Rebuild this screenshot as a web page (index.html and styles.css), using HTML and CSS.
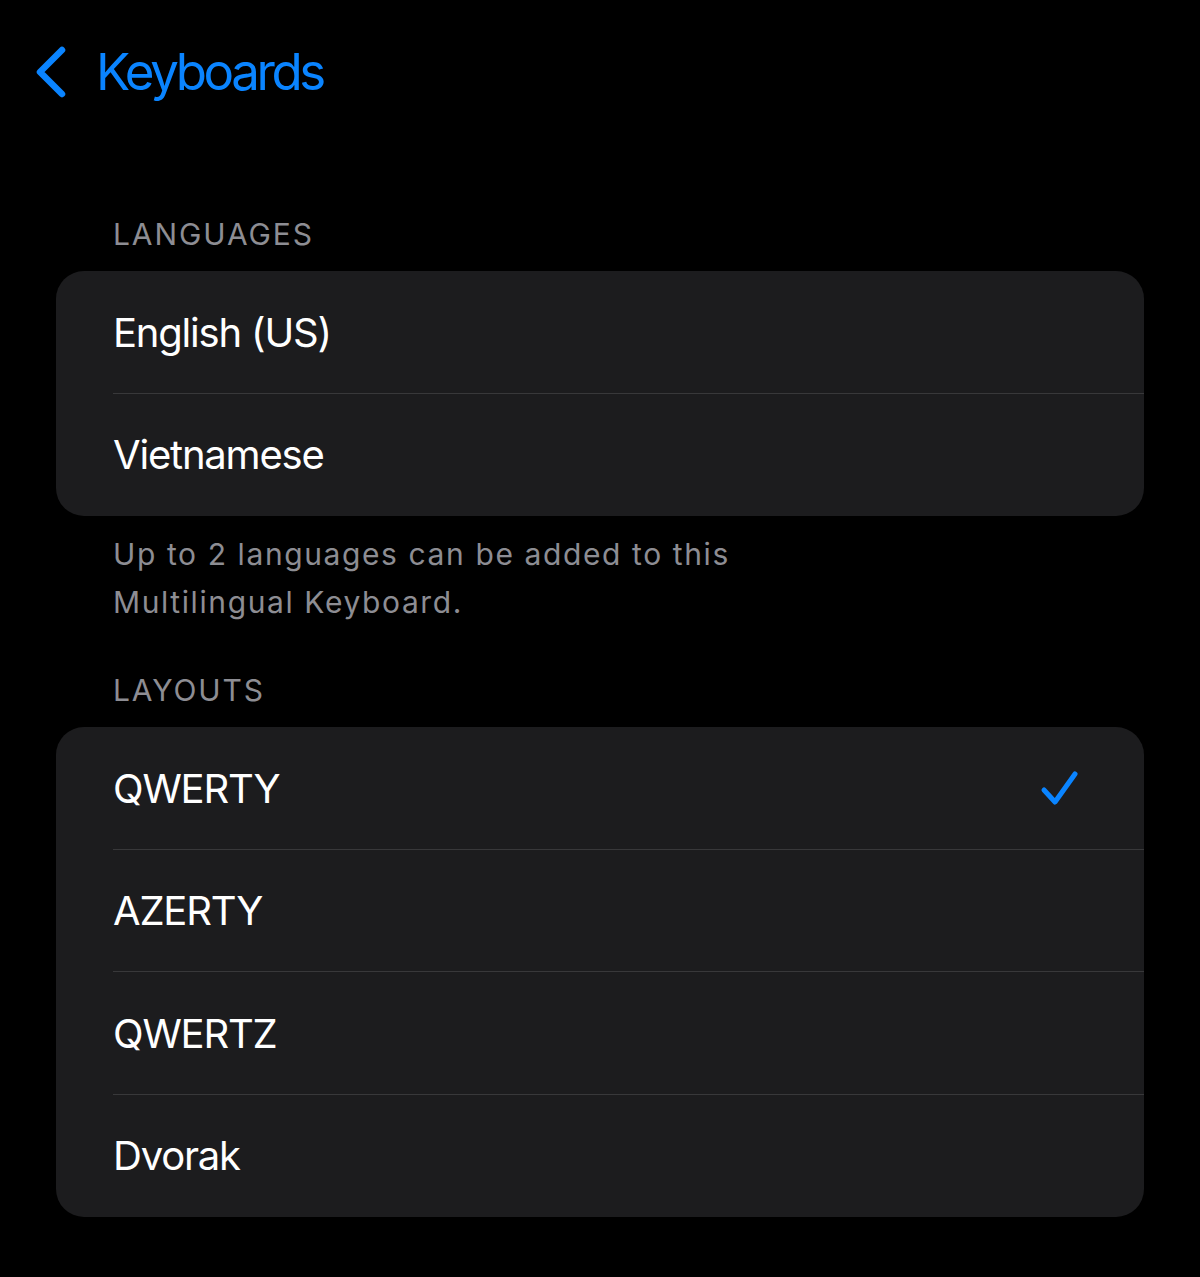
FILE: index.html
```html
<!DOCTYPE html>
<html lang="en">
<head>
    <meta charset="UTF-8">
    <meta name="viewport" content="width=device-width, initial-scale=1.0">
    <title>Keyboard Layouts</title>
    <link rel="stylesheet" href="styles.css">
</head>
<body>
    <div class="nav">
        <a class="back" href="#">
            <svg class="chevron" width="34" height="56" viewBox="0 0 34 56">
                <path d="M28 6 L6 28 L28 50" fill="none" stroke="#0a84ff" stroke-width="6.5" stroke-linecap="round" stroke-linejoin="round"/>
            </svg>
            <span>Keyboards</span>
        </a>
    </div>

    <div class="content">
        <div class="section-header">LANGUAGES</div>
        <div class="group">
            <div class="row"><span class="label">English (US)</span></div>
            <div class="row"><span class="label">Vietnamese</span></div>
        </div>
        <div class="section-footer">Up to 2 languages can be added to this<br>Multilingual Keyboard.</div>

        <div class="section-header">LAYOUTS</div>
        <div class="group">
            <div class="row">
                <span class="label">QWERTY</span>
                <svg class="check" width="40" height="40" viewBox="0 0 40 40">
                    <path d="M4 21 L15 33 L35 5" fill="none" stroke="#0a84ff" stroke-width="5" stroke-linecap="round" stroke-linejoin="round"/>
                </svg>
            </div>
            <div class="row"><span class="label">AZERTY</span></div>
            <div class="row"><span class="label">QWERTZ</span></div>
            <div class="row"><span class="label">Dvorak</span></div>
        </div>
    </div>
</body>
</html>
```

FILE: styles.css
```css
body {
    margin: 0;
    background-color: #000;
    color: #fff;
    font-family: Inter, "Noto Sans", sans-serif;
}

.nav {
    padding: 44px 0 0 34px;
    height: 92px;
}

.back {
    display: flex;
    align-items: center;
    gap: 28px;
    color: #0a84ff;
    text-decoration: none;
    font-size: 51px;
    line-height: 56px;
    letter-spacing: -3.4px;
}

.content {
    padding: 0 56px;
}

.section-header {
    padding: 80px 0 19px 57px;
    font-size: 30px;
    line-height: 36px;
    letter-spacing: 1.9px;
    color: #8d8d93;
}

.content .section-footer + .section-header {
    padding-top: 46px;
}

.group {
    background-color: #1c1c1e;
    border-radius: 28px;
    overflow: hidden;
}

.row {
    display: flex;
    align-items: center;
    justify-content: space-between;
    height: 122.5px;
    margin-left: 57px;
    padding-right: 64px;
    font-size: 40px;
    letter-spacing: -1.2px;
    box-shadow: inset 0 -1px 0 #38383a;
}

.row:last-child {
    box-shadow: none;
}

.check {
    margin-top: 2px;
}

.section-footer {
    padding: 14px 0 0 57px;
    font-size: 30px;
    line-height: 48px;
    letter-spacing: 1.6px;
    color: #8d8d93;
}
```
